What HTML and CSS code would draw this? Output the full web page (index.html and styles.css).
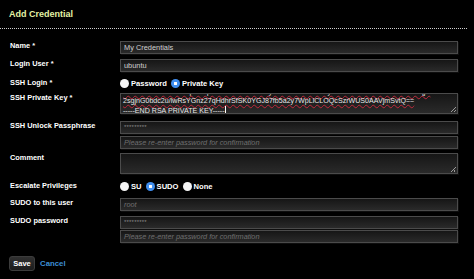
FILE: index.html
```
<!DOCTYPE html>
<html>
<head>
<meta charset="utf-8">
<link rel="stylesheet" href="styles.css">
</head>
<body>
<div class="dialog">
  <div class="header"><h1 class="title">Add Credential</h1></div>
  <form class="form">
    <div class="row r-name">
      <label class="label">Name *</label>
      <div class="field"><input class="input" type="text" value="My Credentials"></div>
    </div>
    <div class="row r-login">
      <label class="label">Login User *</label>
      <div class="field"><input class="input" type="text" value="ubuntu"></div>
    </div>
    <div class="row r-sshlogin">
      <label class="label">SSH Login *</label>
      <div class="field radios">
        <span class="radio"><span class="dot"></span>Password</span>
        <span class="radio"><span class="dot on"></span>Private Key</span>
      </div>
    </div>
    <div class="row r-key">
      <label class="label">SSH Private Key *</label>
      <div class="field">
        <div class="textarea key">
          <div class="keytext">
            <div class="spell">daIWNE1RDHT0bvNpNmqWobUScnmXsr2ueyu0Sa7Ee0dEG0eyEEJs77fAULwnu7nLNMz7NqjD</div>
            <div class="spell">2sgjnG0bdc2u/lwRsYGnz27qHdhrSfSK0YGJ87fb5a2y7WpLlCLOQcSzrWUS0AAVjmSvtQ==</div>
            <div>-----END RSA PRIVATE KEY-----<span class="caret"></span></div>
          </div>
          <span class="grip"></span>
        </div>
      </div>
    </div>
    <div class="row r-pass">
      <label class="label">SSH Unlock Passphrase</label>
      <div class="field stack">
        <div class="input masked">*********</div>
        <div class="input placeholder">Please re-enter password for confirmation</div>
      </div>
    </div>
    <div class="row r-comment">
      <label class="label">Comment</label>
      <div class="field"><div class="textarea comment"><span class="grip"></span></div></div>
    </div>
    <div class="row r-esc">
      <label class="label">Escalate Privileges</label>
      <div class="field radios">
        <span class="radio"><span class="dot"></span>SU</span>
        <span class="radio"><span class="dot on"></span>SUDO</span>
        <span class="radio"><span class="dot"></span>None</span>
      </div>
    </div>
    <div class="row r-sudouser">
      <label class="label">SUDO to this user</label>
      <div class="field"><div class="input placeholder">root</div></div>
    </div>
    <div class="row r-sudopass">
      <label class="label">SUDO password</label>
      <div class="field stack tight">
        <div class="input masked">*********</div>
        <div class="input placeholder">Please re-enter password for confirmation</div>
      </div>
    </div>
    <div class="actions">
      <button type="button" class="btn">Save</button>
      <a class="cancel" href="#">Cancel</a>
    </div>
  </form>
</div>
</body>
</html>
```
FILE: styles.css
```
html, body {
  margin: 0;
  padding: 0;
  background: #000;
}
body {
  font-family: "Liberation Sans", Arial, Helvetica, sans-serif;
  color: #fff;
  width: 474px;
  height: 279px;
  overflow: hidden;
}
.header {
  height: 29px;
  border-bottom: 1px dotted #cfcfcf;
  margin-right: 7px;
  box-sizing: border-box;
  padding: 8px 0 0 9px;
}
.title {
  margin: 0;
  font-size: 9px;
  line-height: 12px;
  font-weight: bold;
  color: #e4f3a6;
}
.form {
  display: flex;
  flex-direction: column;
  padding: 12px 0 0 10px;
}
.row {
  display: grid;
  grid-template-columns: 110px 338px;
  align-items: start;
}
.label {
  font-size: 7.4px;
  line-height: 10px;
  font-weight: bold;
  color: #fff;
  padding-top: 0;
}
.input {
  box-sizing: border-box;
  display: block;
  width: 338px;
  height: 13px;
  margin: 0;
  padding: 0 3px;
  border: 1px solid #4b4b4b;
  background: linear-gradient(#161616, #2a2a2a);
  color: #d0d0d0;
  font-family: "Liberation Sans", Arial, sans-serif;
  font-size: 7.4px;
  line-height: 11px;
  outline: none;
  box-shadow: 1px 1px 0 #0e0e0e;
}
.masked {
  color: #8a8a8a;
  font-size: 6px;
  letter-spacing: 0.2px;
}
.placeholder {
  color: #6f6f6f;
  font-style: italic;
  font-size: 7.3px;
}
.stack {
  display: flex;
  flex-direction: column;
  gap: 2px;
}
.stack.tight { gap: 1px; }
.r-login { margin-top: 5px; }
.r-sshlogin { margin-top: 5px; }
.r-key { margin-top: 4px; }
.r-pass { margin-top: 7px; }
.r-comment { margin-top: 4px; }
.r-esc { margin-top: 6px; }
.r-sudouser { margin-top: 6px; }
.r-sudopass { margin-top: 5px; }

.radios {
  display: flex;
  align-items: center;
  height: 12px;
  gap: 4px;
  font-size: 7.6px;
  font-weight: bold;
  color: #fff;
}
.r-sshlogin .label, .r-esc .label { padding-top: 1px; }
.radio {
  display: inline-flex;
  align-items: center;
  gap: 2px;
}
.dot {
  width: 9px;
  height: 9px;
  border-radius: 50%;
  background: #f4f4f4;
  box-sizing: border-box;
  position: relative;
}
.dot.on {
  background: radial-gradient(circle, #fff 0 1.4px, #3f8ef0 1.8px);
}
.textarea {
  position: relative;
  box-sizing: border-box;
  width: 338px;
  height: 21px;
  border: 1px solid #4b4b4b;
  background: linear-gradient(#161616, #2a2a2a);
  overflow: hidden;
  box-shadow: 1px 1px 0 #0e0e0e;
}
.keytext {
  margin-top: -6px;
  padding-left: 2px;
  font-size: 7.1px;
  line-height: 9px;
  color: #e8e8e8;
  white-space: nowrap;
}
.spell {
  text-decoration: underline wavy #c0283a;
  text-decoration-thickness: 1px;
  text-underline-offset: 1px;
}
.caret {
  display: inline-block;
  width: 1px;
  height: 8px;
  background: #fff;
  vertical-align: -1px;
}
.grip {
  position: absolute;
  right: 1px;
  bottom: 1px;
  width: 5px;
  height: 5px;
  background: linear-gradient(135deg, transparent 0 45%, #9a9a9a 45% 55%, transparent 55% 70%, #9a9a9a 70% 80%, transparent 80%);
}
.actions {
  display: flex;
  align-items: center;
  gap: 5px;
  margin-top: 13px;
  margin-left: -1px;
}
.btn {
  box-sizing: border-box;
  height: 15px;
  width: 26px;
  padding: 0;
  border: 1px solid #3c3c3c;
  border-radius: 3px;
  background: linear-gradient(#303030, #1c1c1c);
  color: #fff;
  font-family: "Liberation Sans", Arial, sans-serif;
  font-size: 7.5px;
  font-weight: bold;
}
.cancel {
  color: #3d8fd6;
  font-size: 7.8px;
  font-weight: bold;
  text-decoration: none;
}
```
